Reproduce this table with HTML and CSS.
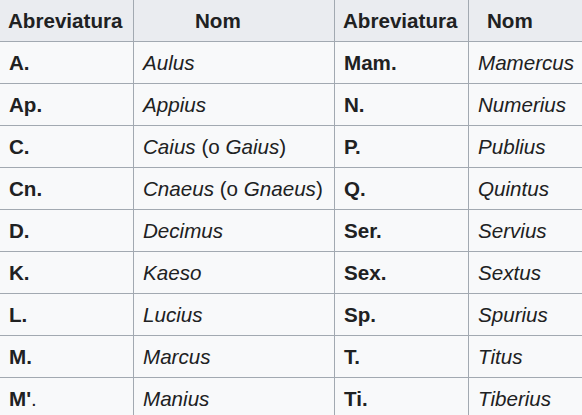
FILE: index.html
```
<!DOCTYPE html>
<html lang="ca">
<head>
<meta charset="utf-8">
<title>Abreviatures</title>
<link rel="stylesheet" href="styles.css">
</head>
<body>
<table class="wikitable">
  <colgroup>
    <col class="c1"><col class="c2"><col class="c3"><col class="c4">
  </colgroup>
  <thead>
    <tr>
      <th class="ab">Abreviatura</th>
      <th class="nom n2">Nom</th>
      <th class="ab">Abreviatura</th>
      <th class="nom n4">Nom</th>
    </tr>
  </thead>
  <tbody>
    <tr><td><b>A.</b></td><td><i>Aulus</i></td><td><b>Mam.</b></td><td><i>Mamercus</i></td></tr>
    <tr><td><b>Ap.</b></td><td><i>Appius</i></td><td><b>N.</b></td><td><i>Numerius</i></td></tr>
    <tr><td><b>C.</b></td><td><i>Caius</i> (o <i>Gaius</i>)</td><td><b>P.</b></td><td><i>Publius</i></td></tr>
    <tr><td><b>Cn.</b></td><td><i>Cnaeus</i> (o <i>Gnaeus</i>)</td><td><b>Q.</b></td><td><i>Quintus</i></td></tr>
    <tr><td><b>D.</b></td><td><i>Decimus</i></td><td><b>Ser.</b></td><td><i>Servius</i></td></tr>
    <tr><td><b>K.</b></td><td><i>Kaeso</i></td><td><b>Sex.</b></td><td><i>Sextus</i></td></tr>
    <tr><td><b>L.</b></td><td><i>Lucius</i></td><td><b>Sp.</b></td><td><i>Spurius</i></td></tr>
    <tr><td><b>M.</b></td><td><i>Marcus</i></td><td><b>T.</b></td><td><i>Titus</i></td></tr>
    <tr><td><b>M'</b>.</td><td><i>Manius</i></td><td><b>Ti.</b></td><td><i>Tiberius</i></td></tr>
  </tbody>
</table>
</body>
</html>
```
FILE: styles.css
```
html, body {
  margin: 0;
  padding: 0;
  overflow: hidden;
  background: #ffffff;
}

.wikitable {
  margin: -1px 0 0 -1px;
  border-collapse: collapse;
  table-layout: fixed;
  width: 587px;
  font-family: "Liberation Sans", Arial, sans-serif;
  font-size: 20.6px;
  color: #202122;
  background: #f8f9fa;
}

.c1 { width: 134px; }
.c2 { width: 201px; }
.c3 { width: 134px; }
.c4 { width: 118px; }

.wikitable th,
.wikitable td {
  border: 1px solid #a2a9b1;
  height: 41px;
  padding: 0 9px;
  line-height: 24px;
  white-space: nowrap;
  text-align: left;
  vertical-align: middle;
  overflow: hidden;
}

.wikitable th {
  background: #eaecf0;
  font-weight: bold;
}

.wikitable th.ab {
  padding-left: 8px;
}

.wikitable th.n2 {
  padding-left: 61px;
}

.wikitable th.n4 {
  padding-left: 18px;
}

.wikitable b {
  font-weight: bold;
}
```
